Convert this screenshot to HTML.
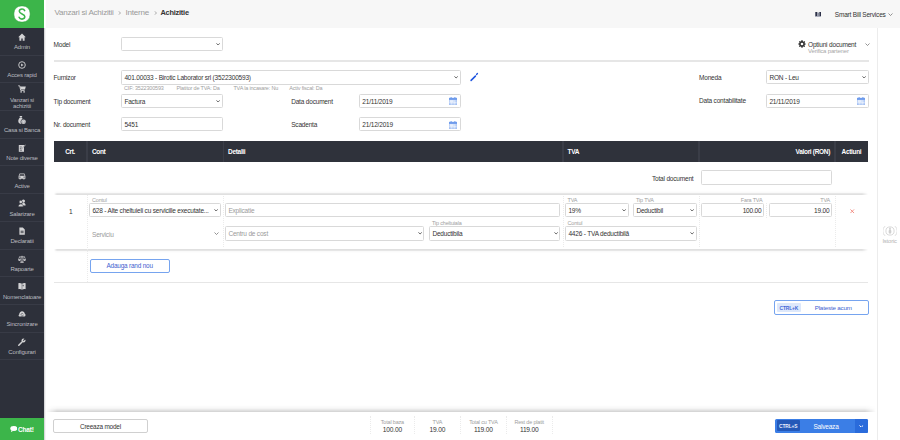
<!DOCTYPE html>
<html><head><meta charset="utf-8">
<style>
*{box-sizing:border-box;margin:0;padding:0}
html,body{width:900px;height:440px;overflow:hidden;background:#fff;font-family:"Liberation Sans",sans-serif;color:#333}
.a{position:absolute}
.t,.v,.lb,#chat{letter-spacing:-0.03em}
.t{position:absolute;white-space:nowrap;line-height:10px;height:10px;margin-top:0.6px}
#side{left:0;top:0;width:43.9px;height:440px;background:#2d303a}
#logo{left:0;top:0;width:44px;height:28px;background:#3cb54a}
.si{position:absolute;left:0;width:44px;height:27.7px;border-bottom:1px solid #383b46}
.si svg{position:absolute;left:18px;width:8px;height:8px}
.si .lb{position:absolute;left:0;width:44px;text-align:center;color:#babcc0;font-size:5.99px;line-height:6px;white-space:nowrap}
#chat{left:0;top:418px;width:44px;height:22px;background:#3cb54a;color:#fff;font-size:6.63px;font-weight:bold;line-height:22px;text-align:center}
#hdr{left:46px;top:0;width:854px;height:27.6px;background:#f7f7f7}
.lbl{font-size:6.53px;color:#333}
.box{position:absolute;border:1px solid #d9d9d9;border-radius:1.5px;background:#fff}
.box .v{position:absolute;left:2px;top:50%;margin-top:-4.3px;font-size:6.53px;line-height:10px;color:#333;white-space:nowrap}
.box .ph{color:#9a9a9a}
.chev{position:absolute;right:1.6px;top:50%;margin-top:-1.2px;width:4.2px;height:2.4px}
.cal{position:absolute;right:2.7px;top:2.3px;width:8px;height:8px}
.sm{font-size:5.46px;color:#9e9e9e}
.th{position:absolute;top:141.3px;height:21px;line-height:21px;color:#fff;font-weight:bold;font-size:6.5px;white-space:nowrap;letter-spacing:-0.05em}
.vd{position:absolute;width:0;border-left:1px dotted #ebebeb}
.hd{position:absolute;width:1.5px;background:#3a3d47}
</style></head><body>
<!-- SIDEBAR -->
<div id="side" class="a"></div>
<div id="logo" class="a">
<svg class="a" style="left:13px;top:5px" width="18" height="18" viewBox="0 0 18 18"><rect x="0.9" y="0.9" width="16.2" height="16.2" rx="7.2" fill="#fff" stroke="#2fa53e" stroke-width="0.6"/><path d="M11.7 5.6 C11.2 4.5 10.2 3.9 9 3.9 C7.4 3.9 6.3 4.9 6.3 6.3 C6.3 9.2 11.8 8.7 11.8 11.6 C11.8 13.1 10.6 14.1 9 14.1 C7.7 14.1 6.6 13.5 6.1 12.3" stroke="#3cb54a" stroke-width="1.55" fill="none" stroke-linecap="round"/></svg>
</div>
<div id="sideitems">
<div class="si" style="top:28.0px"><svg style="top:5px" viewBox="0 0 8 8"><path d="M4 0.6 L0.2 4.2 H1.4 V7.8 H3.3 V5.4 H4.7 V7.8 H6.6 V4.2 H7.8 Z" fill="#d2d2d4"/></svg><div class="lb" style="top:16.4px">Admin</div></div>
<div class="si" style="top:55.7px"><svg style="top:5px" viewBox="0 0 8 8"><circle cx="4" cy="4" r="3.3" fill="none" stroke="#d2d2d4" stroke-width="0.9"/><path d="M3.1 2.5 L5.5 4 L3.1 5.5 Z" fill="#d2d2d4"/></svg><div class="lb" style="top:16.4px">Acces rapid</div></div>
<div class="si" style="top:83.4px"><svg style="top:1.5px" viewBox="0 0 8 8"><path d="M0.2 0.8 H1.7 L2.7 5.4 H6.6" fill="none" stroke="#d2d2d4" stroke-width="0.9"/><path d="M2 1.6 H7.8 L7 4.4 H2.6 Z" fill="#d2d2d4"/><circle cx="3.1" cy="6.9" r="0.8" fill="#d2d2d4"/><circle cx="6.1" cy="6.9" r="0.8" fill="#d2d2d4"/></svg><div class="lb" style="top:15px;line-height:5.2px">Vanzari si<br>achizitii</div></div>
<div class="si" style="top:111.1px"><svg style="top:5px" viewBox="0 0 8 8"><rect x="1.6" y="0" width="2.6" height="1.3" rx="0.4" fill="#d2d2d4"/><path d="M2.2 1.6 C0.8 2.6 0 4.2 0.4 6 C0.7 7.2 1.6 7.8 3 7.8 H3.6 C2.4 7 2.2 5 3.4 3.8 C3.8 3.4 4.2 3.2 4.6 3.1 C4.2 2.4 3.8 1.9 3.6 1.6 Z" fill="#d2d2d4"/><circle cx="5.5" cy="5.7" r="2.3" fill="#d2d2d4"/><circle cx="5.5" cy="5.7" r="1.3" fill="none" stroke="#8e9097" stroke-width="0.4"/></svg><div class="lb" style="top:16.4px">Casa si Banca</div></div>
<div class="si" style="top:138.8px"><svg style="top:5px" viewBox="0 0 8 8"><rect x="0.8" y="1" width="5.2" height="6.8" fill="#d2d2d4"/><path d="M1.8 3 H3.8 M1.8 4.6 H3.4 M1.8 6.2 H4" stroke="#2c2f38" stroke-width="0.6"/><path d="M3.6 5 L7.4 0.8" stroke="#d2d2d4" stroke-width="1"/><path d="M3.6 5 L7.4 0.8" stroke="#2c2f38" stroke-width="0.3"/></svg><div class="lb" style="top:16.4px">Note diverse</div></div>
<div class="si" style="top:166.5px"><svg style="top:5px" viewBox="0 0 8 8"><path d="M1.6 1.5 H6.4 L7.4 4 V6.8 H6.4 V7.6 H5.4 V6.8 H2.6 V7.6 H1.6 V6.8 H0.6 V4 Z" fill="#d2d2d4"/><path d="M2 2.3 H6 L6.6 3.8 H1.4 Z" fill="#2c2f38"/><circle cx="1.9" cy="5.1" r="0.6" fill="#2c2f38"/><circle cx="6.1" cy="5.1" r="0.6" fill="#2c2f38"/></svg><div class="lb" style="top:16.4px">Active</div></div>
<div class="si" style="top:194.2px"><svg style="top:5px" viewBox="0 0 8 8"><circle cx="5.4" cy="2.1" r="1.6" fill="#d2d2d4"/><path d="M3.6 6.4 C3.6 4.6 4.4 3.8 5.4 3.8 C6.6 3.8 7.6 4.6 7.6 6.4 Z" fill="#d2d2d4"/><circle cx="2.8" cy="3" r="1.7" fill="#d2d2d4" stroke="#2c2f38" stroke-width="0.5"/><path d="M0.3 7.8 C0.3 5.8 1.4 4.9 2.8 4.9 C4.2 4.9 5.3 5.8 5.3 7.8 Z" fill="#d2d2d4" stroke="#2c2f38" stroke-width="0.5"/></svg><div class="lb" style="top:16.4px">Salarizare</div></div>
<div class="si" style="top:221.9px"><svg style="top:5px" viewBox="0 0 8 8"><path d="M1.4 0.4 H4.8 L6.8 2.4 V7.7 H1.4 Z" fill="#d2d2d4"/><rect x="2.6" y="3.6" width="3" height="2.6" fill="#6a6c72"/></svg><div class="lb" style="top:16.4px">Declaratii</div></div>
<div class="si" style="top:249.6px"><svg style="top:5px" viewBox="0 0 8 8"><path d="M4 0.8 V6.8 M1.2 1.9 H6.8" stroke="#d2d2d4" stroke-width="0.8"/><path d="M1.5 1.9 L0.3 4.4 M1.5 1.9 L2.7 4.4 M6.5 1.9 L5.3 4.4 M6.5 1.9 L7.7 4.4" stroke="#d2d2d4" stroke-width="0.45"/><path d="M0 4.3 H3 A1.5 1.6 0 0 1 0 4.3 Z M5 4.3 H8 A1.5 1.6 0 0 1 5 4.3 Z" fill="#d2d2d4"/><rect x="2.2" y="6.6" width="3.6" height="1.1" rx="0.4" fill="#d2d2d4"/></svg><div class="lb" style="top:16.4px">Rapoarte</div></div>
<div class="si" style="top:277.3px"><svg style="top:5px" viewBox="0 0 8 8"><path d="M0.4 1.2 C1.8 0.9 3 1.2 4 1.8 C5 1.2 6.2 0.9 7.6 1.2 V7.2 C6.2 6.9 5 7.2 4 7.8 C3 7.2 1.8 6.9 0.4 7.2 Z" fill="#d2d2d4"/><path d="M4 1.8 V7.8" stroke="#2c2f38" stroke-width="0.4"/><circle cx="5.2" cy="3.6" r="0.8" fill="#6a6c72"/></svg><div class="lb" style="top:16.4px">Nomenclatoare</div></div>
<div class="si" style="top:305.0px"><svg style="top:5px" viewBox="0 0 8 8"><path d="M1.6 6.6 C0.5 6.6 0.2 5 1.2 4.5 C1.2 2.7 2.6 1.3 4.1 1.3 C5.5 1.3 6.6 2.4 6.8 3.7 C7.9 4.1 7.8 6.6 6.4 6.6 Z" fill="#d2d2d4"/><path d="M2.9 4.9 A1.3 1.3 0 0 1 5.3 4.1 M5.3 4.9 A1.3 1.3 0 0 1 2.9 5.5" fill="none" stroke="#2d303a" stroke-width="0.55"/></svg><div class="lb" style="top:16.4px">Sincronizare</div></div>
<div class="si" style="top:332.7px"><svg style="top:5px" viewBox="0 0 8 8"><path d="M0.8 7.2 L4 4" stroke="#d2d2d4" stroke-width="1.5" stroke-linecap="round"/><circle cx="5.5" cy="2.5" r="2" fill="#d2d2d4"/><path d="M5.3 2.7 L7.8 0.2" stroke="#2c2f38" stroke-width="1.1"/></svg><div class="lb" style="top:16.4px">Configurari</div></div>
</div><!--/side-->
<div id="chat" class="a"></div><svg class="a" style="left:10px;top:425.8px" width="7.4" height="6.4" viewBox="0 0 7.4 6.4"><ellipse cx="3.8" cy="2.6" rx="3.5" ry="2.5" fill="#fff"/><path d="M1.6 4 L0.9 6.2 L3.2 4.8 Z" fill="#fff"/></svg><div class="t" style="left:18px;top:424.4px;font-size:6.5px;font-weight:bold;color:#fff">Chat!</div>

<!-- HEADER -->
<div id="hdr" class="a"></div>
<div class="a" style="left:44px;top:27.6px;width:2px;height:412.4px;background:linear-gradient(90deg,#c4c5c8,#ebebec 50%,#fff)"></div>
<div class="t" style="left:54.4px;top:7.3px;font-size:8.08px;color:#9a9a9a">Vanzari si Achizitii</div>
<svg class="a" style="left:118.2px;top:11.2px" width="3.4" height="4" viewBox="0 0 3.4 4"><path d="M0.6 0.4 L2.6 2 L0.6 3.6" stroke="#9a9a9a" stroke-width="0.75" fill="none"/></svg>
<div class="t" style="left:125.6px;top:7.3px;font-size:8.08px;color:#9a9a9a">Interne</div>
<svg class="a" style="left:153.7px;top:11.2px" width="3.4" height="4" viewBox="0 0 3.4 4"><path d="M0.6 0.4 L2.6 2 L0.6 3.6" stroke="#9a9a9a" stroke-width="0.75" fill="none"/></svg>
<div class="t" style="left:160.4px;top:7.3px;font-size:7.42px;color:#333;font-weight:bold">Achizitie</div>
<svg class="a" style="left:814.5px;top:11.8px" width="6.6" height="4.8" viewBox="0 0 6.6 4.8"><rect x="0.3" y="0" width="2" height="4" fill="#2d3148"/><rect x="4.3" y="0" width="2" height="4" fill="#2d3148"/><rect x="2.3" y="0.6" width="2" height="3.4" fill="#8a8fa0"/><rect x="0" y="4" width="6.6" height="0.8" fill="#9a9eb0"/></svg>
<div class="t" style="left:834.8px;top:9px;font-size:6.51px;color:#333">Smart Bill Services</div>
<svg class="a" style="left:887.5px;top:13px" width="5" height="3" viewBox="0 0 5 3"><path d="M0.5 0.5 L2.5 2.5 L4.5 0.5" stroke="#666" stroke-width="0.7" fill="none"/></svg>

<!-- RIGHT PANEL -->
<div class="a" style="left:876.5px;top:27.5px;width:1.5px;height:412.5px;background:#ececec"></div>
<svg class="a" style="left:882.5px;top:224.5px" width="14" height="12" viewBox="0 0 14 12"><circle cx="7" cy="6" r="4.1" fill="none" stroke="#cfcfcf" stroke-width="0.8"/><path d="M2 1.2 A6.2 6.2 0 0 0 2 10.8 M12 1.2 A6.2 6.2 0 0 1 12 10.8" fill="none" stroke="#d2d2d2" stroke-width="0.8"/><path d="M7 2.6 C6 2.6 5.9 4 6.5 4.6 C5.6 5.2 5.4 6.6 5.8 8 C6.2 9 7.8 9 8.2 8 C8.6 6.6 8.4 5.2 7.5 4.6 C8.1 4 8 2.6 7 2.6 Z" fill="#d0d0d0"/></svg>
<div class="t" style="left:882.4px;top:235.6px;font-size:5.89px;color:#b4b4b4">Istoric</div>

<!-- MAIN FORM -->
<div class="t lbl" style="left:53.5px;top:39.4px">Model</div>
<div class="box" style="left:121.3px;top:37.2px;width:101.7px;height:14px"><svg class="chev" viewBox="0 0 4.2 2.4"><path d="M0.45 0.45 L2.1 1.95 L3.75 0.45" stroke="#4a4a4a" stroke-width="0.85" fill="none"/></svg></div>
<svg class="a" style="left:797.5px;top:40px" width="8" height="8" viewBox="0 0 8 8"><path d="M3.3 0.3 H4.7 L4.9 1.3 L5.7 1.7 L6.6 1.1 L7.2 2 L6.6 2.8 L6.8 3.4 L7.7 3.6 V4.6 L6.8 4.8 L6.5 5.6 L7.1 6.4 L6.2 7.1 L5.5 6.5 L4.8 6.8 L4.6 7.7 H3.4 L3.2 6.8 L2.4 6.5 L1.6 7.1 L0.9 6.2 L1.5 5.5 L1.2 4.8 L0.3 4.6 V3.4 L1.2 3.2 L1.5 2.5 L0.9 1.7 L1.8 1 L2.5 1.5 L3.1 1.2 Z" fill="#333"/><circle cx="4" cy="4" r="1.3" fill="#fff"/></svg>
<div class="t" style="left:808px;top:39.3px;font-size:6.55px;color:#333">Optiuni document</div>
<svg class="a" style="left:864.5px;top:43px" width="5" height="3" viewBox="0 0 5 3"><path d="M0.5 0.5 L2.5 2.5 L4.5 0.5" stroke="#666" stroke-width="0.7" fill="none"/></svg>
<div class="t" style="left:808px;top:45.9px;font-size:6.02px;color:#a8a8a8">Verifica partener</div>
<div class="a" style="left:53.6px;top:60.1px;width:815px;height:1.8px;background:#e6e6e6"></div>

<div class="t lbl" style="left:53.5px;top:72.3px">Furnizor</div>
<div class="box" style="left:121.4px;top:70.4px;width:339.3px;height:14.2px"><div class="v">401.00033 - Birotic Laborator srl (3522300593)</div><svg class="chev" viewBox="0 0 4.2 2.4"><path d="M0.45 0.45 L2.1 1.95 L3.75 0.45" stroke="#4a4a4a" stroke-width="0.85" fill="none"/></svg></div>
<svg class="a" style="left:468px;top:71px" width="12" height="12" viewBox="0 0 12 12"><path d="M3.1 9.4 L7.4 5.1" stroke="#1f55e0" stroke-width="1.55" stroke-linecap="round"/><path d="M8.6 3.4 L9.4 2.6" stroke="#1f55e0" stroke-width="1.4" stroke-linecap="round"/></svg>
<div class="t sm" style="left:124px;top:82.6px">CIF: 3522300593</div>
<div class="t sm" style="left:176.6px;top:82.6px">Platitor de TVA: Da</div>
<div class="t sm" style="left:233.4px;top:82.6px">TVA la incasare: Nu</div>
<div class="t sm" style="left:289.3px;top:82.6px">Activ fiscal: Da</div>
<div class="t lbl" style="left:699px;top:72.5px">Moneda</div>
<div class="box" style="left:766.4px;top:70.1px;width:102.4px;height:14.2px"><div class="v">RON - Leu</div><svg class="chev" viewBox="0 0 4.2 2.4"><path d="M0.45 0.45 L2.1 1.95 L3.75 0.45" stroke="#4a4a4a" stroke-width="0.85" fill="none"/></svg></div>

<div class="t lbl" style="left:53.6px;top:96px">Tip document</div>
<div class="box" style="left:121.4px;top:93.8px;width:101.6px;height:14px"><div class="v">Factura</div><svg class="chev" viewBox="0 0 4.2 2.4"><path d="M0.45 0.45 L2.1 1.95 L3.75 0.45" stroke="#4a4a4a" stroke-width="0.85" fill="none"/></svg></div>
<div class="t lbl" style="left:291.2px;top:96.2px">Data document</div>
<div class="box" style="left:359.3px;top:93.8px;width:101.6px;height:14px"><div class="v">21/11/2019</div><svg class="cal" viewBox="0 0 8 8"><rect x="0.2" y="1" width="7.6" height="6.8" fill="#c2d6f8" stroke="#86aaf0" stroke-width="0.4"/><rect x="0" y="1" width="8" height="1.9" fill="#6f9cec"/><rect x="1.6" y="0" width="1" height="1.4" fill="#6f9cec"/><rect x="5.4" y="0" width="1" height="1.4" fill="#6f9cec"/><rect x="0.7" y="3.5" width="3.8" height="1.1" fill="#fff"/><path d="M0.4 5.5 H7.6 M2.7 4.6 V7.6 M5.3 3.2 V7.6" stroke="#f2f6fe" stroke-width="0.55"/></svg></div>
<div class="t lbl" style="left:699px;top:95.7px">Data contabilitate</div>
<div class="box" style="left:766.4px;top:93.8px;width:102.4px;height:14.1px"><div class="v">21/11/2019</div><svg class="cal" viewBox="0 0 8 8"><rect x="0.2" y="1" width="7.6" height="6.8" fill="#c2d6f8" stroke="#86aaf0" stroke-width="0.4"/><rect x="0" y="1" width="8" height="1.9" fill="#6f9cec"/><rect x="1.6" y="0" width="1" height="1.4" fill="#6f9cec"/><rect x="5.4" y="0" width="1" height="1.4" fill="#6f9cec"/><rect x="0.7" y="3.5" width="3.8" height="1.1" fill="#fff"/><path d="M0.4 5.5 H7.6 M2.7 4.6 V7.6 M5.3 3.2 V7.6" stroke="#f2f6fe" stroke-width="0.55"/></svg></div>

<div class="t lbl" style="left:53.6px;top:119.5px">Nr. document</div>
<div class="box" style="left:121.4px;top:117.3px;width:101.6px;height:13.9px"><div class="v">5451</div></div>
<div class="t lbl" style="left:291.2px;top:119.5px">Scadenta</div>
<div class="box" style="left:359.3px;top:117.3px;width:101.6px;height:13.9px"><div class="v">21/12/2019</div><svg class="cal" viewBox="0 0 8 8"><rect x="0.2" y="1" width="7.6" height="6.8" fill="#c2d6f8" stroke="#86aaf0" stroke-width="0.4"/><rect x="0" y="1" width="8" height="1.9" fill="#6f9cec"/><rect x="1.6" y="0" width="1" height="1.4" fill="#6f9cec"/><rect x="5.4" y="0" width="1" height="1.4" fill="#6f9cec"/><rect x="0.7" y="3.5" width="3.8" height="1.1" fill="#fff"/><path d="M0.4 5.5 H7.6 M2.7 4.6 V7.6 M5.3 3.2 V7.6" stroke="#f2f6fe" stroke-width="0.55"/></svg></div>

<!-- TABLE HEADER -->
<div class="a" style="left:53.7px;top:141px;width:814.7px;height:20.7px;background:#2f323b"></div>
<div class="hd" style="left:86.4px;top:141px;height:20.8px"></div>
<div class="hd" style="left:222.6px;top:141px;height:20.8px"></div>
<div class="hd" style="left:562.2px;top:141px;height:20.8px"></div>
<div class="hd" style="left:698.3px;top:141px;height:20.8px"></div>
<div class="hd" style="left:834.2px;top:141px;height:20.8px"></div>
<div class="th" style="left:65.2px">Crt.</div>
<div class="th" style="left:91.9px">Cont</div>
<div class="th" style="left:228.1px">Detalii</div>
<div class="th" style="left:567.6px">TVA</div>
<div class="th" style="left:795.6px">Valori (RON)</div>
<div class="th" style="left:841.6px">Actiuni</div>

<div class="t lbl" style="left:652px;top:173.2px;font-size:6.53px">Total document</div>
<div class="box" style="left:701.3px;top:170.4px;width:131px;height:14.4px"></div>

<!-- ROW -->
<div class="a" style="left:53.5px;top:190.5px;width:814.5px;height:4.5px;background:linear-gradient(rgba(0,0,0,0),rgba(0,0,0,0.02) 40%,rgba(0,0,0,0.12) 70%,rgba(0,0,0,0.12));-webkit-mask-image:linear-gradient(90deg,transparent,#000 3px,#000 808px,transparent)"></div>
<div class="a" style="left:53.5px;top:248.8px;width:814.5px;height:4.5px;background:linear-gradient(rgba(0,0,0,0.12),rgba(0,0,0,0.12) 30%,rgba(0,0,0,0.02) 60%,rgba(0,0,0,0));-webkit-mask-image:linear-gradient(90deg,transparent,#000 3px,#000 808px,transparent)"></div>
<div class="vd" style="left:87.2px;top:195px;height:87px"></div>
<div class="vd" style="left:223.2px;top:196px;height:51px"></div>
<div class="vd" style="left:562.8px;top:196px;height:51px"></div>
<div class="vd" style="left:699.2px;top:196px;height:51px"></div>
<div class="vd" style="left:766.3px;top:203px;height:15px"></div>
<div class="vd" style="left:834.8px;top:196px;height:51px"></div>

<div class="t" style="left:69px;top:206.1px;font-size:6.53px">1</div>
<div class="t sm" style="left:92px;top:194.4px">Contul</div>
<div class="box" style="left:89.4px;top:203.1px;width:131.2px;height:14.3px"><div class="v">628 - Alte cheltuieli cu servicille executate...</div><svg class="chev" viewBox="0 0 4.2 2.4"><path d="M0.45 0.45 L2.1 1.95 L3.75 0.45" stroke="#4a4a4a" stroke-width="0.85" fill="none"/></svg></div>
<div class="t" style="left:92px;top:229.1px;font-size:6.53px;color:#9a9a9a">Serviciu</div>
<svg class="a" style="left:214px;top:232px" width="5" height="3" viewBox="0 0 5 3"><path d="M0.5 0.5 L2.5 2.5 L4.5 0.5" stroke="#666" stroke-width="0.7" fill="none"/></svg>

<div class="box" style="left:225.4px;top:203.1px;width:335px;height:14.3px"><div class="v ph">Explicatie</div></div>
<div class="box" style="left:225.4px;top:226.3px;width:199px;height:14.4px"><div class="v ph">Centru de cost</div><svg class="chev" viewBox="0 0 4.2 2.4"><path d="M0.45 0.45 L2.1 1.95 L3.75 0.45" stroke="#4a4a4a" stroke-width="0.85" fill="none"/></svg></div>
<div class="t sm" style="left:432px;top:217.4px">Tip cheltuiala</div>
<div class="box" style="left:429.4px;top:226.3px;width:131px;height:14.4px"><div class="v">Deductibila</div><svg class="chev" viewBox="0 0 4.2 2.4"><path d="M0.45 0.45 L2.1 1.95 L3.75 0.45" stroke="#4a4a4a" stroke-width="0.85" fill="none"/></svg></div>

<div class="t sm" style="left:567.6px;top:194.4px">TVA</div>
<div class="box" style="left:565.4px;top:203.1px;width:63.2px;height:14.3px"><div class="v">19%</div><svg class="chev" viewBox="0 0 4.2 2.4"><path d="M0.45 0.45 L2.1 1.95 L3.75 0.45" stroke="#4a4a4a" stroke-width="0.85" fill="none"/></svg></div>
<div class="t sm" style="left:636px;top:194.4px">Tip TVA</div>
<div class="box" style="left:633.4px;top:203.1px;width:63.2px;height:14.3px"><div class="v">Deductibil</div><svg class="chev" viewBox="0 0 4.2 2.4"><path d="M0.45 0.45 L2.1 1.95 L3.75 0.45" stroke="#4a4a4a" stroke-width="0.85" fill="none"/></svg></div>
<div class="t sm" style="left:567.6px;top:217.4px">Contul</div>
<div class="box" style="left:565.4px;top:226.3px;width:131.2px;height:14.4px"><div class="v">4426 - TVA deductibilă</div><svg class="chev" viewBox="0 0 4.2 2.4"><path d="M0.45 0.45 L2.1 1.95 L3.75 0.45" stroke="#4a4a4a" stroke-width="0.85" fill="none"/></svg></div>

<div class="t sm" style="left:740px;top:194.4px;width:22.4px;text-align:right">Fara TVA</div>
<div class="box" style="left:701.4px;top:203.1px;width:63px;height:14.3px"><div class="v" style="left:auto;right:2px">100.00</div></div>
<div class="t sm" style="left:810px;top:194.4px;width:20px;text-align:right">TVA</div>
<div class="box" style="left:769px;top:203.1px;width:63.4px;height:14.3px"><div class="v" style="left:auto;right:2px">19.00</div></div>
<svg class="a" style="left:850px;top:209.2px" width="4.5" height="4.5" viewBox="0 0 4 4"><path d="M0.4 0.4 L3.6 3.6 M3.6 0.4 L0.4 3.6" stroke="#ef7f74" stroke-width="0.75"/></svg>

<div class="a" style="left:89.6px;top:258.5px;width:80.1px;height:14.2px;border:1px solid #76a4ef;border-radius:2px"></div>
<div class="t" style="left:89.6px;top:260.7px;width:80.1px;text-align:center;font-size:6.42px;color:#3f5fd0">Adauga rand nou</div>
<div class="a" style="left:54px;top:281.5px;width:814px;height:1.2px;background:#e6e6e6"></div>

<div class="a" style="left:774.4px;top:300.3px;width:94.3px;height:14.4px;border:1px solid #76a4ef;border-radius:2px"></div>
<div class="a" style="left:777px;top:302.7px;width:23.7px;height:9.7px;background:#dde8fb;border-radius:1px"></div>
<div class="t" style="left:777px;top:303px;width:23.7px;text-align:center;font-size:4.9px;font-weight:bold;color:#4468d6">CTRL+K</div>
<div class="t" style="left:814.7px;top:302.6px;font-size:6.25px;color:#3f5fd0">Plateste acum</div>

<!-- BOTTOM BAR -->
<div class="a" style="left:46px;top:404.5px;width:830px;height:7.2px;background:linear-gradient(rgba(0,0,0,0),rgba(0,0,0,0.03) 45%,rgba(0,0,0,0.18));-webkit-mask-image:linear-gradient(90deg,transparent,#000 11px,#000 819px,transparent)"></div>
<div class="a" style="left:53.3px;top:418.6px;width:94.3px;height:14.1px;border:1px solid #d0d0d0;border-radius:2px"></div>
<div class="t" style="left:53.3px;top:421px;width:94.3px;text-align:center;font-size:6.42px;color:#333">Creeaza model</div>
<div class="vd" style="left:370.4px;top:416px;height:18px"></div>
<div class="vd" style="left:414.4px;top:416px;height:18px"></div>
<div class="vd" style="left:460.4px;top:416px;height:18px"></div>
<div class="vd" style="left:506.2px;top:416px;height:18px"></div>
<div class="vd" style="left:551.6px;top:416px;height:18px"></div>
<div class="t sm" style="left:370.4px;top:416.7px;width:44px;text-align:center">Total baza</div>
<div class="t" style="left:370.4px;top:424.4px;width:44px;text-align:center;font-size:6.63px;color:#333">100.00</div>
<div class="t sm" style="left:414.4px;top:416.7px;width:46px;text-align:center">TVA</div>
<div class="t" style="left:414.4px;top:424.4px;width:46px;text-align:center;font-size:6.63px;color:#333">19.00</div>
<div class="t sm" style="left:460.4px;top:416.7px;width:46px;text-align:center">Total cu TVA</div>
<div class="t" style="left:460.4px;top:424.4px;width:46px;text-align:center;font-size:6.63px;color:#333">119.00</div>
<div class="t sm" style="left:506.2px;top:416.7px;width:46px;text-align:center">Rest de platit</div>
<div class="t" style="left:506.2px;top:424.4px;width:46px;text-align:center;font-size:6.63px;color:#333">119.00</div>

<div class="a" style="left:774.7px;top:418.7px;width:93.6px;height:14px;background:#3b7ee6;border-radius:1.5px"></div>
<div class="a" style="left:776.7px;top:420.3px;width:23px;height:10.8px;background:#2458b8;border-radius:1px"></div>
<div class="t" style="left:776.7px;top:421.5px;width:23px;text-align:center;font-size:4.9px;font-weight:bold;color:#e8eefc">CTRL+S</div>
<div class="t" style="left:805px;top:421.2px;width:42px;text-align:center;font-size:6.5px;color:#fff">Salveaza</div>
<div class="a" style="left:855px;top:418.7px;width:13.3px;height:14px;background:#2a6bdb;border-radius:0 1.5px 1.5px 0"></div>
<svg class="a" style="left:859.4px;top:424.6px" width="4.6" height="2.8" viewBox="0 0 4.6 2.8"><path d="M0.5 0.5 L2.3 2.2 L4.1 0.5" stroke="#fff" stroke-width="1" fill="none"/></svg>
<!--/MAIN-->
</body></html>
